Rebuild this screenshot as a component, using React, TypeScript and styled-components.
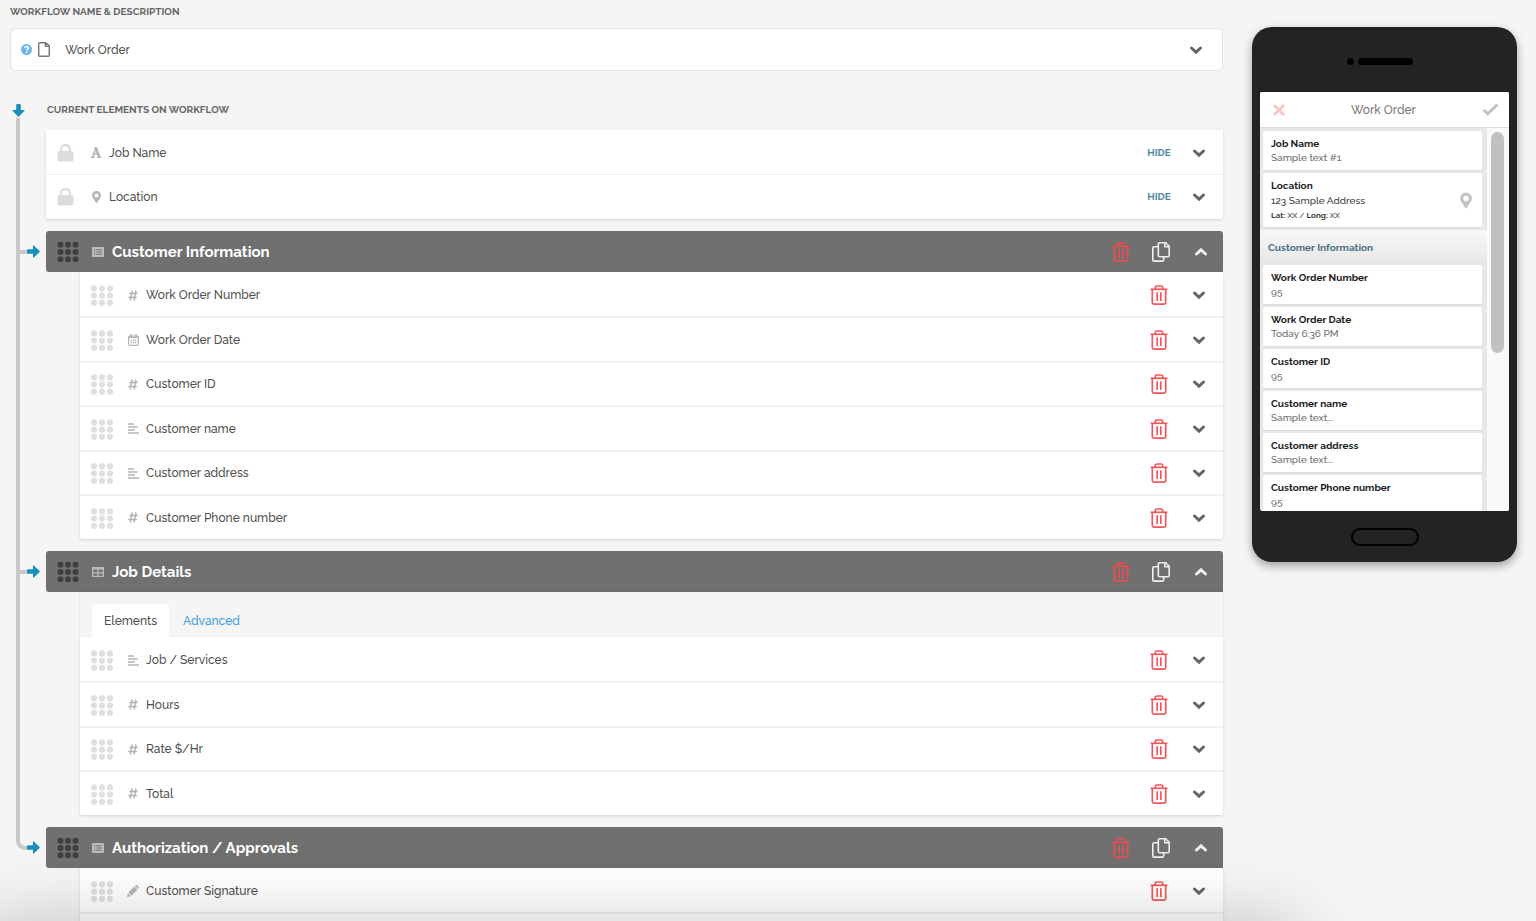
import React from "react";
import styled, { createGlobalStyle } from "styled-components";

const GlobalStyle = createGlobalStyle`
  * { box-sizing: border-box; }
  body { margin: 0; background: #f5f5f5; color: #505050; font: 500 12px/16px Raleway, Lato, "Liberation Sans", sans-serif; }
  button { font: inherit; color: inherit; background: none; border: 0; padding: 0; cursor: pointer; }
  h1, h2, h3, p, ul { margin: 0; padding: 0; }
  ul { list-style: none; }
  svg { display: block; flex: none; }
`;

const Page = styled.div`
  display: flex;
  align-items: flex-start;
  gap: 29px;
  height: 100vh;
  overflow: hidden;
  padding: 0 19px 0 10px;
`;

const Main = styled.main`
  flex: 1;
  min-width: 0;
`;

const Label = styled.h2`
  font-size: 10px;
  line-height: 16px;
  font-weight: 700;
  text-transform: uppercase;
  color: #666;
`;

const NameHeader = styled.div`
  padding: 4px 0 8px;
`;

const NameBox = styled.div`
  display: flex;
  align-items: center;
  height: 43px;
  padding: 0 19px 0 10px;
  background: #fff;
  border: 1px solid #e4e4e4;
  border-radius: 6px;
`;

const HelpButton = styled.button`
  width: 11px;
  height: 11px;
  margin-right: 6px;
`;

const NameText = styled.span`
  flex: 1;
  padding-left: 15px;
`;

const Divider = styled.hr`
  height: 1px;
  margin: 16px 0;
  border: 0;
  background: #f0f0f0;
`;

const Stage = styled.section`
  display: grid;
  grid-template-columns: 36px minmax(0, 1fr);
`;

const StageBody = styled.div`
  padding-bottom: 12px;
`;

const Rail = styled.div`
  display: flex;
  padding-left: 6px;
`;

const StartRail = styled.div`
  display: flex;
  flex-direction: column;
  gap: 1px;
  padding-left: 2px;
`;

const Line = styled.div`
  width: 4px;
  background: #c8c8c8;
`;

const StartLine = styled(Line)`
  flex: 1;
  margin-left: 4px;
`;

const Branch = styled.div`
  display: flex;
  align-items: center;
  height: 41px;
`;

const Stub = styled.div`
  width: 7px;
  height: 4px;
  background: #c8c8c8;
`;

const Elbow = styled.div`
  width: 11px;
  height: 23px;
  border: solid #c8c8c8;
  border-width: 0 0 4px 4px;
  border-bottom-left-radius: 9px;
`;

const StageTitle = styled.div`
  padding: 0 0 14px 1px;
  & > h2 { line-height: 12px; }
`;

const List = styled.ul`
  background: #fff;
  border-radius: 0 0 3px 3px;
  box-shadow: 0 1px 3px rgba(0, 0, 0, 0.14);
`;

const Row = styled.li<{ $locked?: boolean }>`
  display: flex;
  align-items: center;
  height: 44px;
  padding: 0 17px 0 11px;
  border-top: ${(p) => (p.$locked ? 1 : 2)}px solid #f1f1f1;
  &:nth-child(even) { height: 45px; }
  &:first-child { border-top-color: transparent; }
`;

const TypeIcon = styled.span<{ $wide?: boolean }>`
  display: flex;
  justify-content: center;
  width: 14px;
  margin: 0 6px 0 ${(p) => (p.$wide ? 15 : 13)}px;
  color: #b4b4b4;
`;

const RowName = styled.span`
  flex: 1;
`;

const HideButton = styled.button`
  width: 26px;
  font-size: 10px;
  font-weight: 700;
  color: #4d87a2;
`;

const IconButton = styled.button<{ $gap?: number; $color: string }>`
  display: flex;
  margin-left: ${(p) => p.$gap ?? 0}px;
  color: ${(p) => p.$color};
`;

const Bar = styled.header`
  display: flex;
  align-items: center;
  height: 41px;
  padding: 0 15px 0 11px;
  background: #707070;
  border-radius: 3px 3px 0 3px;
`;

const BarIcon = styled.span`
  margin: 0 8px 0 13px;
  color: #bcbcbc;
`;

const BarTitle = styled.h3`
  flex: 1;
  font-size: 15px;
  line-height: 20px;
  font-weight: 700;
  color: #fff;
`;

const Nested = styled.div`
  margin-left: 34px;
`;

const Tabs = styled.div`
  display: flex;
  align-items: flex-end;
  height: 45px;
  padding-left: 12px;
  background: #f5f5f5;
  box-shadow: 0 0 2px rgba(0, 0, 0, 0.12);
`;

const Tab = styled.button<{ $active?: boolean }>`
  height: 33px;
  padding: 0 ${(p) => (p.$active ? 12 : 14)}px;
  border-radius: 3px 3px 0 0;
  background: ${(p) => (p.$active ? "#fff" : "transparent")};
  color: ${(p) => (p.$active ? "#505050" : "#3d9fe0")};
`;

const Phone = styled.aside`
  display: flex;
  flex-direction: column;
  flex: none;
  width: 265px;
  margin-top: 27px;
  padding: 0 8px;
  background: #232323;
  border-radius: 20px;
  box-shadow: 0 4px 10px rgba(0, 0, 0, 0.35);
`;

const PhoneTop = styled.div`
  display: flex;
  justify-content: center;
  align-items: center;
  gap: 4px;
  height: 65px;
  padding: 4px 10px 0 0;
`;

const Camera = styled.span`
  width: 7px;
  height: 7px;
  border-radius: 50%;
  background: #000;
`;

const Speaker = styled.span`
  width: 55px;
  height: 7px;
  border-radius: 4px;
  background: #000;
`;

const PhoneBottom = styled.div`
  display: flex;
  justify-content: center;
  padding: 17px 0 16px;
`;

const HomeButton = styled.button`
  width: 68px;
  height: 18px;
  border: 2px solid #000;
  border-radius: 9px;
`;

const Screen = styled.div`
  border-radius: 2px;
  overflow: hidden;
  background: #e8e8e8;
`;

const ScreenHeader = styled.div`
  display: flex;
  align-items: center;
  justify-content: space-between;
  height: 36px;
  padding: 0 10px 0 13px;
  background: #fff;
  border-bottom: 1px solid #ddd;
  color: #777;
`;

const ScreenBody = styled.div`
  display: flex;
  height: 383px;
  overflow: hidden;
`;

const Preview = styled.div`
  display: flex;
  flex-direction: column;
  gap: 3px;
  flex: 1;
  padding-top: 3px;
`;

const Card = styled.div`
  display: flex;
  align-items: center;
  justify-content: space-between;
  flex: none;
  margin: 0 5px 0 3px;
  padding: 6px 10px 5px 8px;
  background: #fff;
  border-radius: 2px;
  box-shadow: 0 1px 1px rgba(0, 0, 0, 0.06);
  color: #6c6c6c;
  font-size: 10px;
  line-height: 14px;
`;

const CardTitle = styled.h3`
  font-size: 10px;
  line-height: 14px;
  font-weight: 700;
  color: #1c1c1c;
`;

const Address = styled.p`
  line-height: 16px;
  color: #3c3c3c;
`;

const Coordinates = styled.p`
  font-size: 8px;
  line-height: 13px;
  color: #3c3c3c;
`;

const PreviewHeading = styled.h3`
  flex: none;
  height: 35px;
  margin-bottom: -3px;
  padding: 0 8px;
  font-size: 10px;
  line-height: 35px;
  font-weight: 700;
  color: #4a6f87;
  background: linear-gradient(#f8f8f8, #e6e6e6);
`;

const Track = styled.div`
  width: 22px;
  padding: 4px 5px 0 4px;
  background: #fafafa;
`;

const Thumb = styled.div`
  height: 221px;
  border-radius: 7px;
  background: #c1c1c1;
`;

const BottomShade = styled.div`
  position: fixed;
  left: -20px;
  right: 240px;
  bottom: -60px;
  height: 50px;
  border-radius: 25px;
  box-shadow: 0 0 70px 5px rgba(0, 0, 0, 0.25);
  pointer-events: none;
`;

const ArrowRight = () => (
  <svg width="13" height="13" viewBox="0 0 13 13" fill="#1a8fb8" aria-hidden="true">
    <path d="M1.2 4.2H6V.8c0-.5.4-.6.8-.3l5.8 5.5c.3.3.3.7 0 1L6.8 12.500c-.4.3-.8.2-.8-.3V8.800H1.200C.5 8.800 0 8.200 0 7.500v-2c0-.7.5-1.300 1.200-1.300z" />
  </svg>
);

const ArrowDown = () => (
  <svg width="13" height="13" viewBox="0 0 13 13" fill="#1a8fb8" aria-hidden="true">
    <path d="M8.800 1.200V6h3.400c.5 0 .6.4.3.8L7 12.600c-.3.3-.7.3-1 0L.5 6.800C.2 6.400.3 6 .8 6h3.400V1.200C4.200.5 4.800 0 5.500 0h2c.7 0 1.300.5 1.300 1.200z" />
  </svg>
);

const Chevron = ({ up }: { up?: boolean }) => (
  <svg width="14" height="10" viewBox="0 0 14 10" fill="none" stroke="currentColor" strokeWidth="3" strokeLinecap="round" aria-hidden="true">
    <path d={up ? "M2.500 7 7 2.800 11.500 7" : "M2.500 3 7 7.200 11.500 3"} />
  </svg>
);

const Trash = () => (
  <svg width="18" height="20" viewBox="0 0 18 20" fill="none" stroke="currentColor" strokeWidth="1.700" strokeLinejoin="round" aria-hidden="true">
    <path d="M.6 4.300h16.800" />
    <path d="M5.300 4V2.700c0-1 .7-1.700 1.700-1.700h4c1 0 1.700.7 1.700 1.700V4" />
    <path d="M2.300 4.300v13.200c0 1 .6 1.600 1.600 1.600h10.200c1 0 1.600-.6 1.600-1.600V4.300M7.200 7.300v8.600M10.800 7.300v8.600" />
  </svg>
);

const Copy = () => (
  <svg width="18" height="20" viewBox="0 0 18 20" fill="none" stroke="currentColor" strokeWidth="1.600" strokeLinejoin="round" aria-hidden="true">
    <path d="M7.700.8h6L17.200 4.300v9c0 .9-.5 1.400-1.400 1.400H7.700c-.9 0-1.400-.5-1.400-1.400V2.200c0-.9.500-1.400 1.400-1.400z" />
    <path d="M12.800.8v3.900h4.200M6 4.800H2.200C1.300 4.800.8 5.300.8 6.200v11.500c0 .9.5 1.400 1.400 1.400h8.100c.9 0 1.400-.5 1.400-1.400v-2.800" />
  </svg>
);

const Grip = ({ dark }: { dark?: boolean }) => {
  const step = dark ? 7.500 : 8;
  const r = dark ? 3 : 3.100;
  return (
    <svg width="22" height="22" viewBox="0 0 22 22" fill={dark ? "#3f3f3f" : "#e0e0e0"} aria-hidden="true">
      {[0, 1, 2].map((y) =>
        [0, 1, 2].map((x) => (
          <circle key={`${x}${y}`} cx={11 + (x - 1) * step} cy={11 + (y - 1) * 7.200 + (dark ? 0 : 0.600)} r={r} />
        ))
      )}
    </svg>
  );
};

const Lock = () => (
  <svg width="17" height="18" viewBox="0 0 17 18" aria-hidden="true">
    <path d="M4.200 8.500V5C4.200 2.600 6 1.200 8.500 1.200S12.800 2.600 12.800 5v3.500" fill="none" stroke="#dcdcdc" strokeWidth="2.200" />
    <rect x=".5" y="7" width="16" height="10.500" rx="1.800" fill="#dcdcdc" />
  </svg>
);

const Help = () => (
  <svg width="11" height="11" viewBox="0 0 11 11" aria-hidden="true">
    <circle cx="5.500" cy="5.500" r="5.500" fill="#6db6ec" />
    <path d="M3.700 4.100c.2-1 .9-1.500 1.900-1.500 1.100 0 1.800.6 1.800 1.500 0 1.200-1.600 1.200-1.600 2.300" fill="none" stroke="#fff" strokeWidth="1.500" />
    <circle cx="5.700" cy="8.200" r=".9" fill="#fff" />
  </svg>
);

const FileIcon = () => (
  <svg width="12" height="15" viewBox="0 0 12 15" fill="none" stroke="#777" strokeWidth="1.400" strokeLinejoin="round" aria-hidden="true">
    <path d="M1.800.7h6L11.300 4v9.200c0 .7-.4 1.100-1.100 1.100H1.800c-.7 0-1.100-.4-1.100-1.100V1.800C.7 1.100 1.100.7 1.800.7zM7.500.9v3.500H11" />
  </svg>
);

const Pin = ({ large }: { large?: boolean }) => (
  <svg width={large ? 12 : 9} height={large ? 17 : 12} viewBox="0 0 12 16" fill="currentColor" aria-hidden="true">
    <path fillRule="evenodd" d="M6 0a6 6 0 0 1 6 6c0 1-.3 1.900-.7 2.600L6.700 15.500c-.3.5-1.100.5-1.400 0L.7 8.600A5.500 5.500 0 0 1 0 6a6 6 0 0 1 6-6zm0 3.300a2.700 2.700 0 1 0 0 5.400 2.700 2.700 0 0 0 0-5.400z" />
  </svg>
);

const Cross = () => (
  <svg width="12" height="12" viewBox="0 0 12 12" stroke="#f9c6c6" strokeWidth="3" strokeLinecap="round" aria-hidden="true">
    <path d="m2 2 8 8M10 2l-8 8" />
  </svg>
);

const Check = () => (
  <svg width="17" height="13" viewBox="0 0 17 13" fill="none" stroke="#bfc2c5" strokeWidth="3" aria-hidden="true">
    <path d="m1.500 6.800 4.300 4L15.500 1.500" />
  </svg>
);

type Kind = "text" | "pin" | "number" | "date" | "lines" | "sign" | "form" | "grid";

const Glyph = ({ kind }: { kind: Kind }) => {
  switch (kind) {
    case "pin":
      return <Pin />;
    case "text":
      return (
        <svg width="10" height="11" viewBox="0 0 10 11" fill="none" stroke="currentColor" aria-hidden="true">
          <path d="M5 1 8.300 10" strokeWidth="2.400" />
          <path d="M4.900.5 1.700 10M2.800 7h4M0 10.200h3.600M6 10.200h4M3.500.7h2" strokeWidth="1.500" />
        </svg>
      );
    case "number":
      return (
        <svg width="10" height="11" viewBox="0 0 10 11" fill="none" stroke="currentColor" strokeWidth="1.500" aria-hidden="true">
          <path d="M4.200.5 2.200 10.500M8 .5l-2 10M1.200 3.500h8.500M.3 7.500h8.500" />
        </svg>
      );
    case "date":
      return (
        <svg width="11" height="12" viewBox="0 0 11 12" fill="none" stroke="currentColor" aria-hidden="true">
          <rect x=".6" y="2" width="9.800" height="9.300" rx="1.200" strokeWidth="1.200" />
          <path d="M.6 3.200h9.800" strokeWidth="1.600" />
          <path d="M3 0v3M8 0v3" strokeWidth="1.500" />
          <path d="M2.500 6.200h1.300m.9 0H6m.9 0h1.400M2.500 8.600h1.300m.9 0H6m.9 0h1.400" strokeWidth="1.500" />
        </svg>
      );
    case "lines":
      return (
        <svg width="11" height="11" viewBox="0 0 11 11" fill="none" stroke="currentColor" strokeWidth="1.400" aria-hidden="true">
          <path d="M0 1h6M0 4h9.500M0 7h7M0 10h11" />
        </svg>
      );
    case "sign":
      return (
        <svg width="12" height="12" viewBox="0 0 12 12" fill="currentColor" aria-hidden="true">
          <path d="M0 12l.8-3.700L3.700 11.200zM1.300 7.600 7.300 1.600l3.100 3.100-6 6zM8 1l.7-.7c.4-.4 1-.4 1.400 0l1.600 1.600c.4.4.4 1 0 1.400l-.7.700z" />
        </svg>
      );
    case "grid":
      return (
        <svg width="12" height="10" viewBox="0 0 12 10" fill="none" stroke="currentColor" aria-hidden="true">
          <rect x=".6" y=".6" width="10.800" height="8.800" rx=".8" strokeWidth="1.300" />
          <path d="M0 1.300h12" strokeWidth="2.400" />
          <path d="M6 2v7.500M.6 5.800h10.800" strokeWidth="1.300" />
        </svg>
      );
    default:
      return (
        <svg width="12" height="10" viewBox="0 0 12 10" aria-hidden="true">
          <rect width="12" height="10" rx="1" fill="currentColor" />
          <path d="M2 2.800h1.300m.9 0H10M2 5h1.300m.9 0H10M2 7.200h1.300m.9 0H10" stroke="#707070" strokeWidth="1.100" />
        </svg>
      );
  }
};

type Item = { kind: Kind; name: string };

const fixed: Item[] = [
  { kind: "text", name: "Job Name" },
  { kind: "pin", name: "Location" },
];

const stages: { kind: Kind; title: string; tabs?: boolean; items: Item[] }[] = [
  {
    kind: "form",
    title: "Customer Information",
    items: [
      { kind: "number", name: "Work Order Number" },
      { kind: "date", name: "Work Order Date" },
      { kind: "number", name: "Customer ID" },
      { kind: "lines", name: "Customer name" },
      { kind: "lines", name: "Customer address" },
      { kind: "number", name: "Customer Phone number" },
    ],
  },
  {
    kind: "grid",
    title: "Job Details",
    tabs: true,
    items: [
      { kind: "lines", name: "Job / Services" },
      { kind: "number", name: "Hours" },
      { kind: "number", name: "Rate $/Hr" },
      { kind: "number", name: "Total" },
    ],
  },
  {
    kind: "form",
    title: "Authorization / Approvals",
    items: [{ kind: "sign", name: "Customer Signature" }],
  },
];

const previews = [
  ["Work Order Number", "95"],
  ["Work Order Date", "Today 6:36 PM"],
  ["Customer ID", "95"],
  ["Customer name", "Sample text..."],
  ["Customer address", "Sample text..."],
  ["Customer Phone number", "95"],
];

export default function App() {
  return (
    <>
      <GlobalStyle />
      <Page>
        <Main>
          <NameHeader>
            <Label>Workflow name &amp; description</Label>
          </NameHeader>
          <NameBox>
            <HelpButton aria-label="Help"><Help /></HelpButton>
            <FileIcon />
            <NameText>Work Order</NameText>
            <IconButton $color="#666" aria-label="Expand workflow details"><Chevron /></IconButton>
          </NameBox>
          <Divider />

          <Stage>
            <StartRail>
              <ArrowDown />
              <StartLine />
            </StartRail>
            <StageBody>
              <StageTitle><Label>Current elements on workflow</Label></StageTitle>
              <List>
                {fixed.map((item) => (
                  <Row key={item.name} $locked>
                    <Lock />
                    <TypeIcon $wide><Glyph kind={item.kind} /></TypeIcon>
                    <RowName>{item.name}</RowName>
                    <HideButton>HIDE</HideButton>
                    <IconButton $gap={20} $color="#666" aria-label={`Expand ${item.name}`}><Chevron /></IconButton>
                  </Row>
                ))}
              </List>
            </StageBody>
          </Stage>

          {stages.map((stage, i) => (
            <Stage key={stage.title}>
              <Rail>
                {i < stages.length - 1 ? (
                  <>
                    <Line />
                    <Branch><Stub /><ArrowRight /></Branch>
                  </>
                ) : (
                  <>
                    <Elbow />
                    <Branch><ArrowRight /></Branch>
                  </>
                )}
              </Rail>
              <StageBody>
                <Bar>
                  <Grip dark />
                  <BarIcon><Glyph kind={stage.kind} /></BarIcon>
                  <BarTitle>{stage.title}</BarTitle>
                  <IconButton $color="#ee4a4f" aria-label={`Delete ${stage.title}`}><Trash /></IconButton>
                  <IconButton $gap={22} $color="#eee" aria-label={`Copy ${stage.title}`}><Copy /></IconButton>
                  <IconButton $gap={24} $color="#eee" aria-label={`Collapse ${stage.title}`}><Chevron up /></IconButton>
                </Bar>
                <Nested>
                  {stage.tabs && (
                    <Tabs role="tablist">
                      <Tab role="tab" aria-selected="true" $active>Elements</Tab>
                      <Tab role="tab" aria-selected="false">Advanced</Tab>
                    </Tabs>
                  )}
                  <List>
                    {stage.items.map((item) => (
                      <Row key={item.name}>
                        <Grip />
                        <TypeIcon><Glyph kind={item.kind} /></TypeIcon>
                        <RowName>{item.name}</RowName>
                        <IconButton $color="#f0575a" aria-label={`Delete ${item.name}`}><Trash /></IconButton>
                        <IconButton $gap={24} $color="#666" aria-label={`Expand ${item.name}`}><Chevron /></IconButton>
                      </Row>
                    ))}
                    {i === stages.length - 1 && <Row />}
                  </List>
                </Nested>
              </StageBody>
            </Stage>
          ))}
        </Main>

        <Phone>
          <PhoneTop><Camera /><Speaker /></PhoneTop>
          <Screen>
            <ScreenHeader>
              <Cross />
              <span>Work Order</span>
              <Check />
            </ScreenHeader>
            <ScreenBody>
              <Preview>
                <Card>
                  <div>
                    <CardTitle>Job Name</CardTitle>
                    <p>Sample text #1</p>
                  </div>
                </Card>
                <Card>
                  <div>
                    <CardTitle>Location</CardTitle>
                    <Address>123 Sample Address</Address>
                    <Coordinates><b>Lat:</b> XX / <b>Long:</b> XX</Coordinates>
                  </div>
                  <IconButton $color="#c4c4c4" aria-label="Open map"><Pin large /></IconButton>
                </Card>
                <PreviewHeading>Customer Information</PreviewHeading>
                {previews.map(([title, value]) => (
                  <Card key={title}>
                    <div>
                      <CardTitle>{title}</CardTitle>
                      <p>{value}</p>
                    </div>
                  </Card>
                ))}
              </Preview>
              <Track><Thumb /></Track>
            </ScreenBody>
          </Screen>
          <PhoneBottom><HomeButton aria-label="Home" /></PhoneBottom>
        </Phone>
      </Page>
      <BottomShade />
    </>
  );
}
